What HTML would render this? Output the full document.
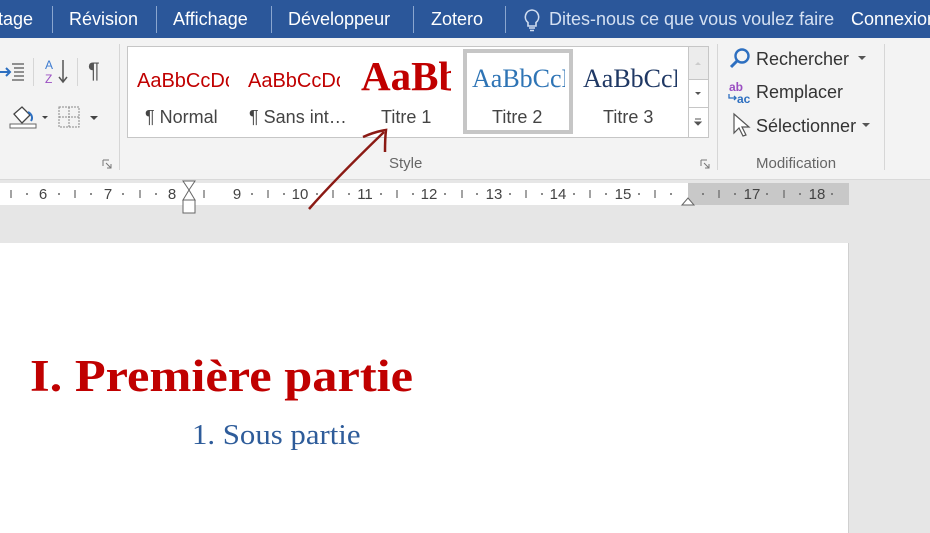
<!DOCTYPE html>
<html><head><meta charset="utf-8"><style>
*{margin:0;padding:0;box-sizing:border-box}
body{width:930px;height:523px;overflow:hidden;position:relative;background:#e6e6e6;font-family:"Liberation Sans",sans-serif}
.a{position:absolute;white-space:nowrap}
#top{left:0;top:0;width:930px;height:38px;background:#2b579a;color:#fff;font-size:18px}
#top .a{top:9px}
.sep{position:absolute;top:6px;width:1px;height:27px;background:#8aa6cf}
#rib{left:0;top:38px;width:930px;height:142px;background:#f3f3f3;border-bottom:1px solid #d9d9d9}
.gal{left:127px;top:46px;width:582px;height:92px;background:#fff;border:1px solid #c6c6c6}
.lbl{font-size:18px;color:#444}
.vs{position:absolute;width:1px;background:#d6d6d6}
</style></head><body>
<div id="top" class="a">
 <span class="a" style="left:-2px">tage</span>
 <div class="sep" style="left:52px"></div>
 <span class="a" style="left:69px">Révision</span>
 <div class="sep" style="left:156px"></div>
 <span class="a" style="left:173px">Affichage</span>
 <div class="sep" style="left:271px"></div>
 <span class="a" style="left:288px">Développeur</span>
 <div class="sep" style="left:413px"></div>
 <span class="a" style="left:431px">Zotero</span>
 <div class="sep" style="left:505px"></div>
 <svg class="a" style="left:523px;top:8px" width="18" height="24" viewBox="0 0 18 24"><path d="M9 2a7 7 0 0 0-4 12.5V18h8v-3.5A7 7 0 0 0 9 2z M6 20h6 M7 22.5h4" fill="none" stroke="#cfdcf0" stroke-width="1.6"/></svg>
 <span class="a" style="left:549px;color:#d4e0f2">Dites-nous ce que vous voulez faire</span>
 <span class="a" style="left:851px">Connexion</span>
</div>
<div id="rib" class="a"></div>
<svg class="a" style="left:0;top:58px" width="30" height="28"><path d="M0 14h10M6 10l4 4-4 4" stroke="#2d6fc0" stroke-width="2" fill="none"/><path d="M12 6h12M14 10h10M14 14h10M14 18h10M12 22h12" stroke="#555" stroke-width="1.3"/></svg>
<div class="vs" style="left:33px;top:58px;height:28px"></div>
<svg class="a" style="left:44px;top:56px" width="26" height="30"><text x="1" y="13" font-size="12" fill="#3d7bd0" font-family="Liberation Sans">A</text><text x="1" y="27" font-size="12" fill="#9b4fc2" font-family="Liberation Sans">Z</text><path d="M19 4v21M15 21l4 5 4-5" stroke="#555" stroke-width="1.5" fill="none"/></svg>
<div class="vs" style="left:77px;top:58px;height:28px"></div>
<span class="a" style="left:88px;top:58px;font-size:22px;color:#555">¶</span>
<svg class="a" style="left:8px;top:104px" width="42" height="26"><path d="M6 10l8-7 8 8-8 8z" fill="#fff" stroke="#444" stroke-width="1.3"/><path d="M20 8c4 2 5 6 3 9" stroke="#2d6fc0" stroke-width="2" fill="none"/><rect x="2" y="20" width="26" height="4" fill="#fff" stroke="#666"/><path d="M34 12l3 3 3-3z" fill="#444"/></svg>
<svg class="a" style="left:58px;top:106px" width="44" height="22"><rect x="1" y="1" width="20" height="20" fill="none" stroke="#888" stroke-dasharray="2 1"/><path d="M11 1v20M1 11h20" stroke="#888" stroke-dasharray="2 1"/><path d="M32 10l4 4 4-4z" fill="#444"/></svg>
<svg class="a" style="left:102px;top:159px" width="10" height="10"><path d="M1 1h6M1 1v6M4 4l5 5M9 5v4h-4" stroke="#777" fill="none"/></svg>
<div class="vs" style="left:119px;top:44px;height:126px"></div>
<div class="a gal"></div>
<span class="a" style="left:137px;top:70px;font-size:20px;color:#c00000;width:92px;overflow:hidden">AaBbCcDc</span>
<span class="a lbl" style="left:145px;top:107px">¶ Normal</span>
<span class="a" style="left:248px;top:70px;font-size:20px;color:#c00000;width:92px;overflow:hidden">AaBbCcDc</span>
<span class="a lbl" style="left:249px;top:107px">¶ Sans int…</span>
<span class="a" style="left:361px;top:52px;font-size:41px;font-weight:bold;color:#c00000;font-family:'Liberation Serif',serif;width:90px;overflow:hidden">AaBb</span>
<span class="a lbl" style="left:381px;top:107px">Titre 1</span>
<div class="a" style="left:463px;top:49px;width:110px;height:85px;border:4px solid #c6c6c6"></div>
<span class="a" style="left:472px;top:64px;font-size:26px;color:#2e74b5;font-family:'Liberation Serif',serif;width:93px;overflow:hidden">AaBbCcD</span>
<span class="a lbl" style="left:492px;top:107px">Titre 2</span>
<span class="a" style="left:583px;top:64px;font-size:26px;color:#1f3864;font-family:'Liberation Serif',serif;width:94px;overflow:hidden">AaBbCcD</span>
<span class="a lbl" style="left:603px;top:107px">Titre 3</span>
<div class="a" style="left:688px;top:46px;width:21px;height:92px;border:1px solid #c6c6c6;background:#fff"></div>
<div class="a" style="left:689px;top:47px;width:19px;height:32px;background:#ececec"></div>
<div class="a" style="left:688px;top:79px;width:21px;height:1px;background:#c6c6c6"></div>
<div class="a" style="left:688px;top:107px;width:21px;height:1px;background:#c6c6c6"></div>
<svg class="a" style="left:692px;top:58px" width="12" height="76"><path d="M3 7l3-3 3 3z" fill="#ccc"/><path d="M3 34l3 3 3-3z" fill="#555"/><path d="M3 61h6M3 64l3 3 3-3z" stroke="#555" fill="#555"/></svg>
<span class="a" style="left:389px;top:155px;font-size:15px;color:#666">Style</span>
<svg class="a" style="left:700px;top:159px" width="10" height="10"><path d="M1 1h6M1 1v6M4 4l5 5M9 5v4h-4" stroke="#777" fill="none"/></svg>
<div class="vs" style="left:717px;top:44px;height:126px"></div>
<svg class="a" style="left:728px;top:47px" width="24" height="24"><circle cx="14" cy="9" r="6.5" fill="none" stroke="#2d6fc0" stroke-width="2.4"/><path d="M9.5 13.5L3 20" stroke="#2d6fc0" stroke-width="3"/></svg>
<span class="a lbl" style="left:756px;top:49px;color:#333">Rechercher</span>
<svg class="a" style="left:857px;top:55px" width="10" height="6"><path d="M1 1h8l-4 4z" fill="#555"/></svg>
<svg class="a" style="left:727px;top:80px" width="26" height="26"><text x="2" y="11" font-size="12" fill="#9b4fc2" font-family="Liberation Sans" font-weight="bold">ab</text><text x="10" y="23" font-size="12" fill="#2d6fc0" font-family="Liberation Sans" font-weight="bold">ac</text><path d="M2 14v4h7M7 16l2 2-2 2" stroke="#2d6fc0" fill="none" stroke-width="1.3"/></svg>
<span class="a lbl" style="left:756px;top:82px;color:#333">Remplacer</span>
<svg class="a" style="left:731px;top:112px" width="20" height="26"><path d="M3 2v19l5-5 4 8 3-1-4-8h7z" fill="#fff" stroke="#555" stroke-width="1.2"/></svg>
<span class="a lbl" style="left:756px;top:116px;color:#333">Sélectionner</span>
<svg class="a" style="left:861px;top:122px" width="10" height="6"><path d="M1 1h8l-4 4z" fill="#555"/></svg>
<span class="a" style="left:756px;top:155px;font-size:15px;color:#666">Modification</span>
<div class="vs" style="left:884px;top:44px;height:126px"></div>
<div class="a" style="left:0;top:183px;width:688px;height:22px;background:#fff"></div>
<div class="a" style="left:688px;top:183px;width:161px;height:22px;background:#c8c8c8"></div>
<svg class="a" style="left:0;top:180px" width="930" height="36" font-family="Liberation Sans" font-size="15" fill="#444">
<g text-anchor="middle"><text x="43" y="19">6</text><text x="108" y="19">7</text><text x="172" y="19">8</text><text x="237" y="19">9</text><text x="300" y="19">10</text><text x="365" y="19">11</text><text x="429" y="19">12</text><text x="494" y="19">13</text><text x="558" y="19">14</text><text x="623" y="19">15</text><text x="752" y="19">17</text><text x="817" y="19">18</text></g>
<g stroke="#666" stroke-width="1.2"><path d="M11 10v8M75 10v8M140 10v8M204 10v8M268 10v8M333 10v8M397 10v8M462 10v8M526 10v8M590 10v8M655 10v8M719 10v8M784 10v8"/></g>
<g fill="#666"><circle cx="27" cy="14" r="1"/><circle cx="59" cy="14" r="1"/><circle cx="91" cy="14" r="1"/><circle cx="123" cy="14" r="1"/><circle cx="156" cy="14" r="1"/><circle cx="252" cy="14" r="1"/><circle cx="284" cy="14" r="1"/><circle cx="317" cy="14" r="1"/><circle cx="349" cy="14" r="1"/><circle cx="381" cy="14" r="1"/><circle cx="413" cy="14" r="1"/><circle cx="445" cy="14" r="1"/><circle cx="477" cy="14" r="1"/><circle cx="510" cy="14" r="1"/><circle cx="542" cy="14" r="1"/><circle cx="574" cy="14" r="1"/><circle cx="606" cy="14" r="1"/><circle cx="639" cy="14" r="1"/><circle cx="671" cy="14" r="1"/><circle cx="703" cy="14" r="1"/><circle cx="735" cy="14" r="1"/><circle cx="767" cy="14" r="1"/><circle cx="800" cy="14" r="1"/><circle cx="832" cy="14" r="1"/></g>
<path d="M183 1h12l-6 9zM189 10l-6 10h12z" fill="#fff" stroke="#666"/><rect x="183" y="20" width="12" height="13" fill="#fff" stroke="#666"/>
<path d="M682 25l6-7 6 7z" fill="#fff" stroke="#666"/>
</svg>
<div class="a" style="left:0;top:243px;width:849px;height:290px;background:#fff;border-right:1px solid #d0d0d0"></div>
<span class="a" style="left:30px;top:350px;font-size:45px;font-weight:bold;color:#c00000;font-family:'Liberation Serif',serif;transform:scaleX(1.12);transform-origin:0 0">I. Première partie</span>
<span class="a" style="left:192px;top:420px;font-size:28px;color:#2e5c9a;font-family:'Liberation Serif',serif;transform:scaleX(1.1);transform-origin:0 0">1. Sous partie</span>
<svg class="a" style="left:300px;top:120px" width="100" height="100"><path d="M9 89C30 65 55 40 84 12" stroke="#8b1a14" stroke-width="2.5" fill="none"/><path d="M63 17C72 13 79 11 86 10C85 18 85 25 85 32" stroke="#8b1a14" stroke-width="2.5" fill="none"/></svg>
</body></html>
